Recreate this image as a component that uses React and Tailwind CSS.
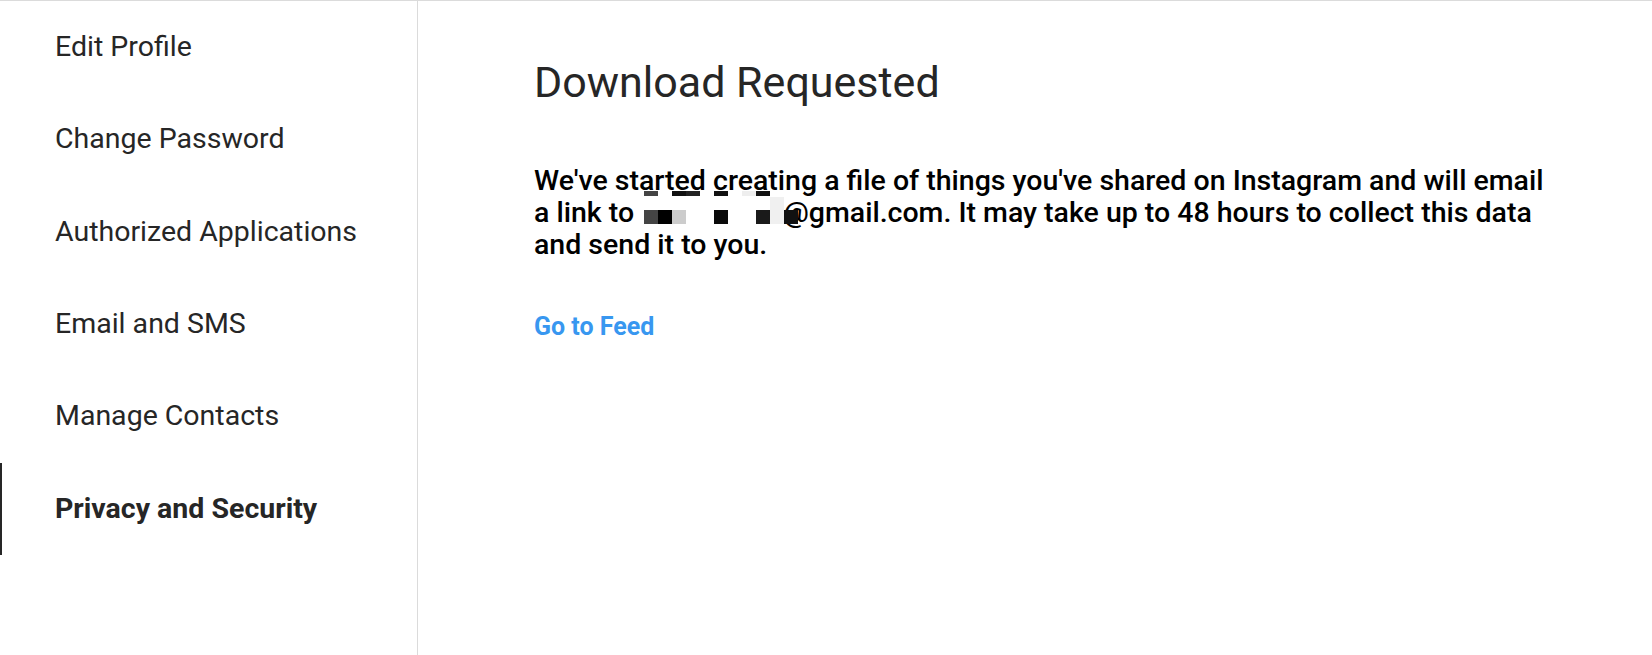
import React from "react";

const navItems = [
  "Edit Profile",
  "Change Password",
  "Authorized Applications",
  "Email and SMS",
  "Manage Contacts",
  "Privacy and Security",
];

// pixelated blocks covering the address
const redaction = [
  { left: "left-[3px]", top: "-top-[17px]", h: "h-[5px]", bg: "bg-[#444444]" },
  { left: "left-[31px]", top: "-top-[17px]", h: "h-[5px]", bg: "bg-[#111111]" },
  { left: "left-[45px]", top: "-top-[17px]", h: "h-[5px]", bg: "bg-[#222222]" },
  { left: "left-[73px]", top: "-top-[17px]", h: "h-[5px]", bg: "bg-[#111111]" },
  { left: "left-[101px]", top: "-top-[17px]", h: "h-[5px]", bg: "bg-[#eeeeee]" },
  { left: "left-[115px]", top: "-top-[17px]", h: "h-[5px]", bg: "bg-[#111111]" },
  { left: "left-[3px]", top: "top-[2px]", h: "h-[14px]", bg: "bg-[#444444]" },
  { left: "left-[17px]", top: "top-[2px]", h: "h-[14px]", bg: "bg-[#000000]" },
  { left: "left-[31px]", top: "top-[2px]", h: "h-[14px]", bg: "bg-[#cccccc]" },
  { left: "left-[73px]", top: "top-[2px]", h: "h-[14px]", bg: "bg-[#0a0a0a]" },
  { left: "left-[115px]", top: "top-[2px]", h: "h-[14px]", bg: "bg-[#1a1a1a]" },
  { left: "left-[129px]", top: "-top-[11px]", h: "h-[27px]", bg: "bg-[#f0f0f0]" },
  { left: "left-[143px]", top: "top-[2px]", h: "h-[14px]", bg: "bg-[#111111]" },
];

const Redacted = () => (
  <span className="relative inline-block w-[142px] h-[14px] align-baseline">
    {redaction.map((b, i) => (
      <span key={i} className={`absolute w-[14px] ${b.left} ${b.top} ${b.h} ${b.bg}`} />
    ))}
  </span>
);

const App = () => {
  const active = "Privacy and Security";

  return (
    <div
      className="flex h-[655px] w-full border-t border-[#dbdbdb] bg-white text-[#262626]"
      style={{ fontFamily: "Roboto, 'Liberation Sans', sans-serif" }}
    >
      <aside className="w-[418px] shrink-0 border-r border-[#dbdbdb]">
        <ul>
          {navItems.map((item) => (
            <li
              key={item}
              className={
                item === active
                  ? "flex h-[92.4px] items-center border-l-2 border-[#262626] pl-[53px] text-[28.5px] font-bold"
                  : "flex h-[92.4px] items-center pl-[55px] text-[28.5px]"
              }
            >
              {item}
            </li>
          ))}
        </ul>
      </aside>

      <main className="flex-1 pl-[116px] pt-[57px]">
        <h1 className="text-[43px] leading-[48px] font-normal">Download Requested</h1>

        <p className="mt-[59px] max-w-[1018px] text-[28.5px] leading-[32px] font-medium text-black">
          We've started creating a file of things you've shared on Instagram and will email a link to{" "}
          <Redacted />@gmail.com. It may take up to 48 hours to collect this data and send it to you.
        </p>

        <a href="#" className="mt-[50px] block text-[25px] leading-[32px] font-bold text-[#3897f0]">
          Go to Feed
        </a>
      </main>
    </div>
  );
};

export default App;
